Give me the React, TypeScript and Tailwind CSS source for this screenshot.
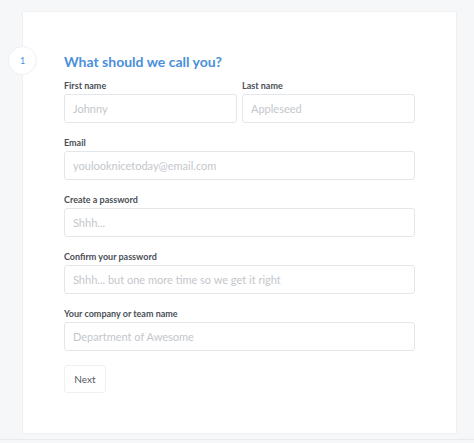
import React from "react";

function Field({ label, placeholder }: { label: string; placeholder: string }) {
  return (
    <div className="flex flex-col">
      <label className="mb-[4px] text-[9px] font-bold leading-none text-[#4a4f57]">{label}</label>
      <input
        placeholder={placeholder}
        className="h-[29px] w-full rounded-[3px] border border-[#e3e6ea] bg-white px-[8px] text-[11px] text-[#333] outline-none placeholder:text-[#c3c7cc]"
      />
    </div>
  );
}

export default function App() {
  return (
    <div
      className="h-[443px] w-[474px] bg-[#f6f7f9] pt-[11px] pl-[22px] pr-[17px]"
      style={{ fontFamily: "Lato, 'Open Sans', sans-serif" }}
    >
      <div className="relative h-[423px] border border-[#eef0f2] bg-white px-[41px] pt-[43px]">
        {/* step badge */}
        <div className="absolute left-[-15px] top-[34px] flex h-[29px] w-[29px] items-center justify-center rounded-full border border-[#eef0f3] bg-white text-[9px] text-[#4a90d9]">
          1
        </div>

        <h1 className="text-[14px] font-bold leading-none text-[#4a90d9]">What should we call you?</h1>

        <div className="mt-[12px] flex flex-col gap-[15px]">
          <div className="grid grid-cols-2 gap-[5px]">
            <Field label="First name" placeholder="Johnny" />
            <Field label="Last name" placeholder="Appleseed" />
          </div>
          <Field label="Email" placeholder="youlooknicetoday@email.com" />
          <Field label="Create a password" placeholder="Shhh..." />
          <Field label="Confirm your password" placeholder="Shhh... but one more time so we get it right" />
          <Field label="Your company or team name" placeholder="Department of Awesome" />
        </div>

        <button className="mt-[14px] h-[28px] w-[42px] rounded-[3px] border border-[#eef0f2] bg-white text-[10px] text-[#555b63]">
          Next
        </button>
      </div>
      <div className="mt-[5px] ml-[-22px] mr-[-17px] border-t border-[#e8eaed]" />
    </div>
  );
}
